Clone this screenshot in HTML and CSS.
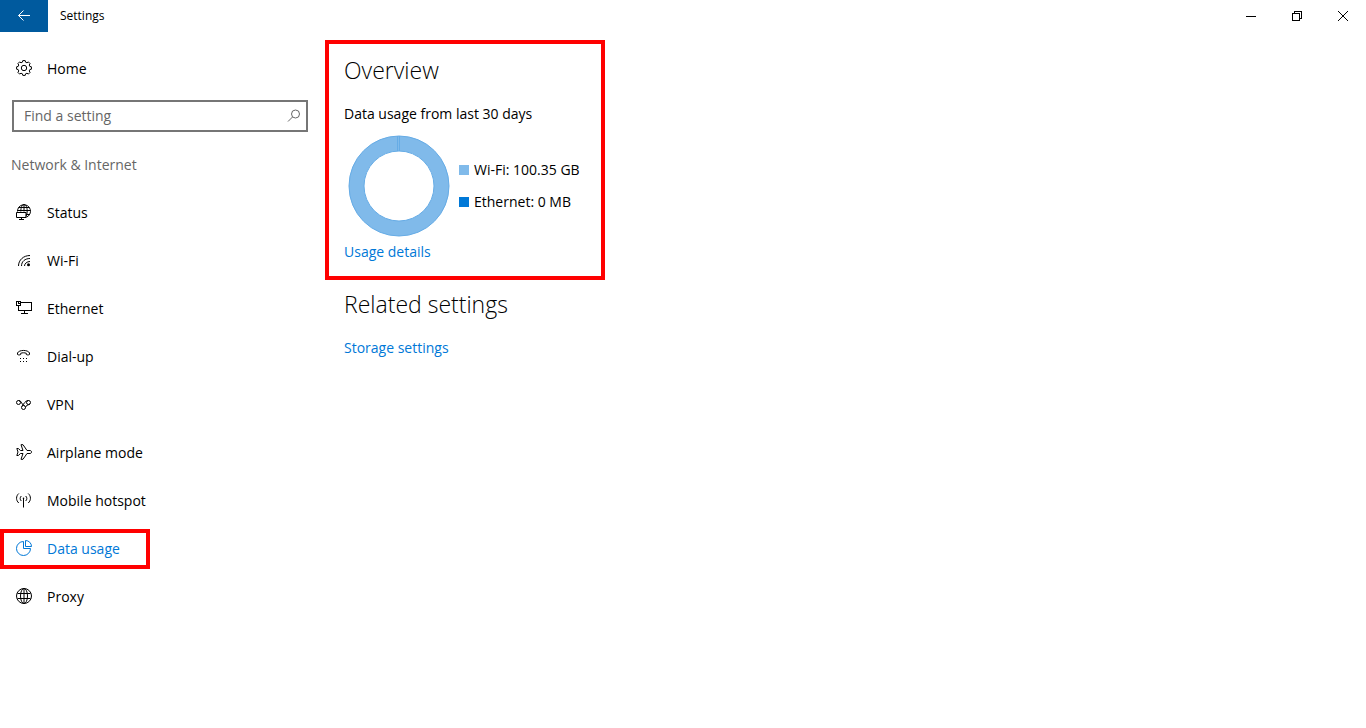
FILE: index.html
```html
<!DOCTYPE html>
<html lang="en">
<head>
<meta charset="utf-8">
<title>Settings</title>
<link rel="stylesheet" href="styles.css">
</head>
<body>
<header class="titlebar">
  <button class="back" aria-label="Back"><svg class="icon" viewBox="0 0 16 16"><path d="M14 7.5H2.5M7.5 2.5l-5 5 5 5"/></svg></button>
  <h1 class="title">Settings</h1>
  <div class="window-controls">
    <button class="control" aria-label="Minimize"><svg class="icon crisp" viewBox="0 0 16 16"><path d="M3 8.5h10"/></svg></button>
    <button class="control" aria-label="Restore"><svg class="icon crisp" viewBox="0 0 16 16"><path d="M3.5 5.5h7v7h-7zM5.500 5.500v-2h7v7h-2"/></svg></button>
    <button class="control" aria-label="Close"><svg class="icon" viewBox="0 0 16 16"><path d="M3 3l10 10M13 3L3 13"/></svg></button>
  </div>
</header>
<div class="layout">
  <aside class="sidebar">
    <a class="nav-link home" href="#"><svg class="icon" viewBox="-8 -8 16 16"><path d="M-1.200-7.400H1.200L1.600-5.800 2.970-5.230 4.380-6.080 6.080-4.380 5.230-2.970 5.800-1.600 7.400-1.200V1.200L5.800 1.600 5.230 2.970 6.080 4.380 4.380 6.080 2.970 5.230 1.600 5.800 1.200 7.400H-1.200L-1.600 5.800-2.970 5.230-4.380 6.080-6.080 4.380-5.230 2.970-5.800 1.600-7.400 1.200V-1.200L-5.800-1.600-5.230-2.970-6.080-4.380-4.380-6.080-2.970-5.230-1.600-5.800z"/><circle r="2.700"/></svg>Home</a>
    <form class="search" role="search">
      <input class="search-input" type="text" placeholder="Find a setting" aria-label="Find a setting">
      <button class="search-button" type="button" aria-label="Search"><svg class="icon" viewBox="0 0 16 16"><circle cx="9.500" cy="6" r="4"/><path d="M6.500 9L2 13.500"/></svg></button>
    </form>
    <h2 class="group">Network &amp; Internet</h2>
    <nav>
      <ul class="nav">
        <li class="nav-item"><a class="nav-link" href="#"><svg class="icon" viewBox="0 0 16 16"><path d="M1.500 7.500A6.500 6.500 0 1 1 10.500 13.200M2.500 3.500H13.500M10 10.500H13.500M1.500 6.500H14.500M4.800 7.500C4.800 3.500 6 .5 8 .5s3.200 3 3.200 6.500c0 2-.4 4-1.200 5.500M8 .5v7M.5 8.500h9.500v5H.5zM5.500 13.500v2M3 15.500h5"/></svg>Status</a></li>
        <li class="nav-item"><a class="nav-link" href="#"><svg class="icon" viewBox="0 0 16 16"><path d="M2.500 14C2.500 8 7.500 3.500 14 3.500M5.500 14c0-4.500 3.500-7.500 8.500-7.500M8.500 14c0-2.500 2.500-4.500 5.500-4.500"/><circle class="solid" cx="12.500" cy="12.800" r="1.500"/></svg>Wi-Fi</a></li>
        <li class="nav-item"><a class="nav-link" href="#"><svg class="icon crisp" viewBox="0 0 16 16"><path d="M5 2.500h10.500v8h-13V6M.5 1.500h4v4h-4zM2.500 2v2M1.500 3.500h2M8.500 10.500v3M5 13.500h7"/></svg>Ethernet</a></li>
        <li class="nav-item"><a class="nav-link" href="#"><svg class="icon" viewBox="0 0 16 16"><path d="M1.500 6.500V5C3 1.600 12 1.600 13.500 5v1.500c-1 .6-2.200.6-3.200 0V5.300c-1.600-.7-4-.7-5.600 0v1.200c-1 .6-2.200.6-3.200 0z"/><path class="solid-dots" d="M4 10h1v1H4zM7 10h1v1H7zM10 10h1v1h-1zM4 13h1v1H4zM7 13h1v1H7zM10 13h1v1h-1z"/></svg>Dial-up</a></li>
        <li class="nav-item"><a class="nav-link" href="#"><svg class="icon" viewBox="0 0 16 16"><circle cx="2.500" cy="6.500" r="2"/><circle cx="12.500" cy="6.500" r="2"/><circle cx="7.500" cy="11.500" r="2"/><path d="M2.500 4.500C6 4.300 5.500 9.500 8.500 9.600M12.500 4.500C9 4.500 8 8 5.800 10.300M14 8C11.500 9.500 10 9 9.500 11.500"/></svg>VPN</a></li>
        <li class="nav-item"><a class="nav-link" href="#"><svg class="icon" viewBox="0 0 16 16"><path d="M.8 4.500h1.500L4.500 6.500H7L5 .7h2L11 6.500h3c2 0 2 3 0 3h-3L7 15.300H5l2-5.800H4.500l-2.200 2H.8L2 8z"/></svg>Airplane mode</a></li>
        <li class="nav-item"><a class="nav-link" href="#"><svg class="icon" viewBox="0 0 16 16"><path d="M7.500 6v9.500M5.300 9c-1.500-1.500-1.500-3.500 0-5M9.700 9c1.500-1.500 1.500-3.500 0-5M2.800 11C-.2 8.500-.2 4 2.800 1.500M12.200 11c3-2.500 3-7 0-9.500"/><circle class="solid" cx="7.500" cy="6.300" r=".8"/></svg>Mobile hotspot</a></li>
        <li class="nav-item selected"><a class="nav-link" href="#" aria-current="page"><svg class="icon" viewBox="0 0 16 16"><path d="M7.500 1.500a7 7 0 1 0 7 7h-7zM9.500.5v6h6a6 6 0 0 0-6-6z"/></svg>Data usage</a></li>
        <li class="nav-item"><a class="nav-link" href="#"><svg class="icon" viewBox="0 0 16 16"><circle cx="8" cy="8" r="7.500"/><ellipse cx="8" cy="8" rx="3.500" ry="7.500"/><path d="M8 .5v15M1.500 5.500h13M1.500 10.500h13"/></svg>Proxy</a></li>
      </ul>
    </nav>
  </aside>
  <main class="content">
    <section class="overview">
      <h2 class="heading">Overview</h2>
      <p class="period">Data usage from last 30 days</p>
      <div class="usage">
        <svg class="donut" viewBox="0 0 102 102" role="img" aria-label="Wi-Fi 100.35 GB, Ethernet 0 MB"><circle class="ring" cx="51" cy="51" r="42.500"/><circle class="edge" cx="51" cy="51" r="50"/><circle class="edge" cx="51" cy="51" r="35"/><path class="edge" d="M49.500 1v15M51.500 1v15"/></svg>
        <ul class="legend">
          <li class="legend-item wifi">Wi-Fi: 100.35 GB</li>
          <li class="legend-item ethernet">Ethernet: 0 MB</li>
        </ul>
      </div>
      <a class="link" href="#">Usage details</a>
    </section>
    <section class="related">
      <h2 class="heading">Related settings</h2>
      <a class="link" href="#">Storage settings</a>
    </section>
  </main>
</div>
</body>
</html>
```

FILE: styles.css
```css
* { box-sizing: border-box; }
body { margin: 0; background: #fff; color: #000; font: 14px/20px "Open Sans", "Noto Sans", sans-serif; }
h1, h2, p, ul { margin: 0; padding: 0; font-weight: 400; }
ul { list-style: none; }
a { color: inherit; text-decoration: none; }
button { display: flex; align-items: center; justify-content: center; padding: 0; border: 0; background: none; color: inherit; font: inherit; }

.icon { flex: none; width: 16px; height: 16px; fill: none; stroke: currentColor; stroke-width: 1; }
.crisp { shape-rendering: crispEdges; }
.solid, .solid-dots { fill: currentColor; stroke: none; }

.titlebar { display: flex; align-items: center; height: 32px; }
.back { width: 48px; height: 32px; background: #005a9e; color: #fff; }
.title { flex: 1; padding-left: 12px; font-size: 12px; line-height: 16px; }
.window-controls { display: flex; }
.control { width: 46px; height: 32px; }

.layout { display: flex; }
.sidebar { flex: none; width: 325px; padding-top: 12px; }
.nav-link { display: flex; align-items: center; gap: 15px; height: 48px; padding: 2px 0 0 16px; }
.nav-link .icon { margin-bottom: 2px; }
.search { display: flex; height: 32px; margin: 8px 17px 0 12px; border: 2px solid #767676; }
.search-input { flex: 1; min-width: 0; padding: 0 10px; border: 0; outline: 0; background: none; font: inherit; }
.search-input::placeholder { color: #666; opacity: 1; }
.search-button { width: 24px; color: #666; }
.group { margin: 23px 0 13px; padding-left: 11px; color: #666; font-size: 14px; line-height: 20px; }
.selected { padding: 5px 0 3px; color: #0078d7; }
.selected .nav-link { width: 150px; height: 40px; padding: 0 0 0 12px; border: 4px solid #f00; }

.content { flex: 1; padding-top: 8px; }
.overview { width: 280px; padding: 10px 15px 14px; border: 4px solid #f00; }
.heading { font-size: 23px; font-weight: 300; line-height: 32px; }
.period { margin-top: 18px; }
.usage { display: flex; align-items: center; gap: 9px; padding: 11px 0 5px 4px; }
.donut { flex: none; width: 102px; height: 102px; fill: none; }
.ring { stroke: #80baea; stroke-width: 15; }
.edge { stroke: #66ace6; stroke-width: 1; }
.legend { display: grid; gap: 12px; white-space: nowrap; }
.legend-item { display: flex; align-items: center; gap: 5px; }
.legend-item::before { content: ""; width: 10px; height: 10px; }
.wifi::before { background: #80baea; }
.ethernet::before { background: #0078d7; }
.link { display: block; color: #0078d7; }
.related { padding: 8px 19px; }
.related .link { margin-top: 18px; }
```
